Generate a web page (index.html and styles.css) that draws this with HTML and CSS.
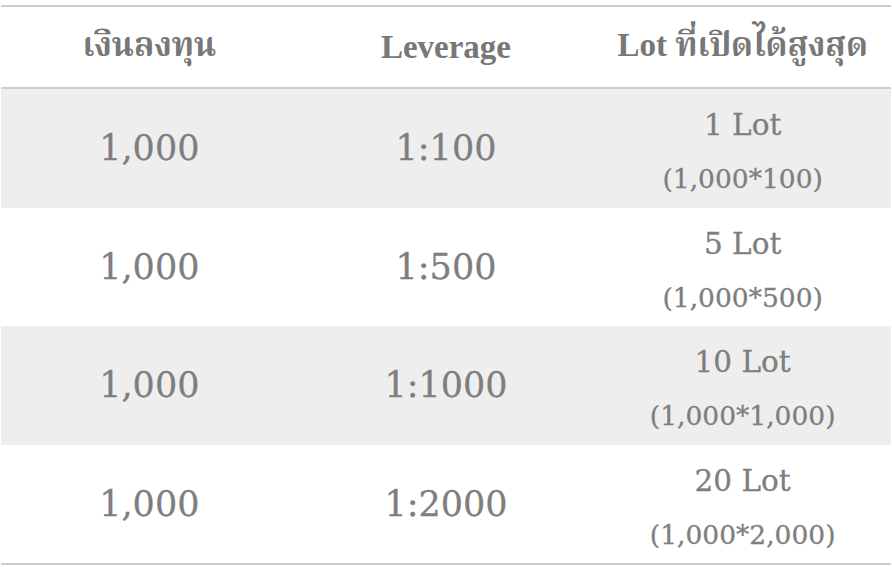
FILE: index.html
```html
<!DOCTYPE html>
<html lang="th">
<head>
<meta charset="utf-8">
<title>Leverage</title>
<link rel="stylesheet" href="styles.css">
</head>
<body>
<div class="wrap">
<table class="lev">
  <thead>
    <tr>
      <th>เงินลงทุน</th>
      <th>Leverage</th>
      <th>Lot ที่เปิดได้สูงสุด</th>
    </tr>
  </thead>
  <tbody>
    <tr class="alt">
      <td>1,000</td>
      <td>1:100</td>
      <td><div class="lot"><span class="main">1 Lot</span><span class="sub">(1,000*100)</span></div></td>
    </tr>
    <tr>
      <td>1,000</td>
      <td>1:500</td>
      <td><div class="lot"><span class="main">5 Lot</span><span class="sub">(1,000*500)</span></div></td>
    </tr>
    <tr class="alt">
      <td>1,000</td>
      <td>1:1000</td>
      <td><div class="lot"><span class="main">10 Lot</span><span class="sub">(1,000*1,000)</span></div></td>
    </tr>
    <tr class="last">
      <td>1,000</td>
      <td>1:2000</td>
      <td><div class="lot"><span class="main">20 Lot</span><span class="sub">(1,000*2,000)</span></div></td>
    </tr>
  </tbody>
</table>
</div>
</body>
</html>
```

FILE: styles.css
```css
html, body {
  margin: 0;
  padding: 0;
  background: #ffffff;
}

.wrap {
  padding: 5px 1px 0 1px;
}

.lev {
  width: 890px;
  border-collapse: collapse;
  table-layout: fixed;
  font-family: "DejaVu Serif", "Liberation Serif", serif;
  color: #7e7e7e;
}

.lev th {
  height: 80px;
  padding: 0;
  border-top: 2px solid #cccccc;
  border-bottom: 2px solid #cccccc;
  font-family: "Liberation Serif", "Norasi", "Noto Serif Thai", "Noto Sans Thai Looped", "Noto Sans", serif;
  font-weight: bold;
  font-size: 33px;
  color: #777777;
  text-align: center;
  vertical-align: middle;
}

.lev td {
  height: 118.5px;
  padding: 0;
  text-align: center;
  vertical-align: middle;
  font-size: 35px;
  -webkit-text-stroke: 0.3px #7e7e7e;
}

.lev tr.alt td {
  background: #eeeeee;
}

.lev tr.last td {
  border-bottom: 2px solid #cccccc;
}

.lot {
  display: flex;
  flex-direction: column;
  align-items: center;
  padding-top: 8px;
}

.lot .main {
  font-size: 29.5px;
  line-height: 53px;
}

.lot .sub {
  font-size: 26.5px;
  line-height: 53px;
}
```
